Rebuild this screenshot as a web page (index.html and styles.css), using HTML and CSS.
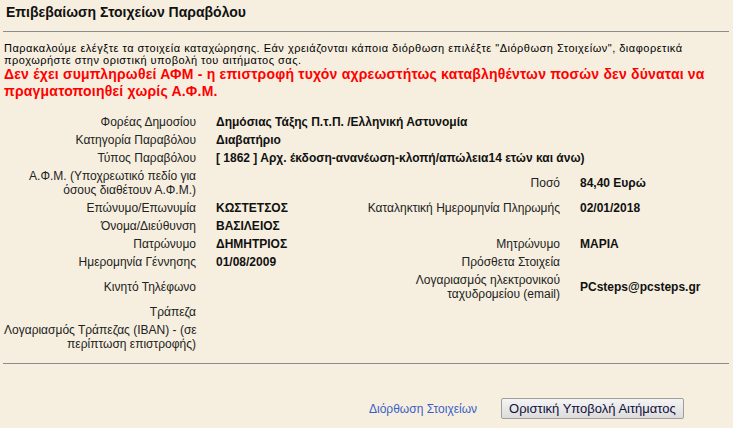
FILE: index.html
```html
<!DOCTYPE html>
<html lang="el">
<head>
<meta charset="utf-8">
<title>Επιβεβαίωση Στοιχείων Παραβόλου</title>
<link rel="stylesheet" href="styles.css">
</head>
<body>
<div class="page">
  <h1 class="title">Επιβεβαίωση Στοιχείων Παραβόλου</h1>
  <hr class="rule rule-top">
  <p class="intro">Παρακαλούμε ελέγξτε τα στοιχεία καταχώρησης. Εάν χρειάζονται κάποια διόρθωση επιλέξτε "Διόρθωση Στοιχείων", διαφορετικά προχωρήστε στην οριστική υποβολή του αιτήματος σας.</p>
  <p class="warning">Δεν έχει συμπληρωθεί ΑΦΜ - η επιστροφή τυχόν αχρεωστήτως καταβληθέντων ποσών δεν δύναται να πραγματοποιηθεί χωρίς Α.Φ.Μ.</p>

  <div class="details">
    <div class="label">Φορέας Δημοσίου</div>
    <div class="value wide">Δημόσιας Τάξης Π.τ.Π. /Ελληνική Αστυνομία</div>

    <div class="label">Κατηγορία Παραβόλου</div>
    <div class="value wide">Διαβατήριο</div>

    <div class="label">Τύπος Παραβόλου</div>
    <div class="value wide">[ 1862 ] Αρχ. έκδοση-ανανέωση-κλοπή/απώλεια14 ετών και άνω)</div>

    <div class="label">Α.Φ.Μ. (Υποχρεωτικό πεδίο για<br>όσους διαθέτουν Α.Φ.Μ.)</div>
    <div class="value"></div>
    <div class="label">Ποσό</div>
    <div class="value">84,40 Ευρώ</div>

    <div class="label">Επώνυμο/Επωνυμία</div>
    <div class="value">ΚΩΣΤΕΤΣΟΣ</div>
    <div class="label">Καταληκτική Ημερομηνία Πληρωμής</div>
    <div class="value">02/01/2018</div>

    <div class="label">Όνομα/Διεύθυνση</div>
    <div class="value">ΒΑΣΙΛΕΙΟΣ</div>
    <div class="label"></div>
    <div class="value"></div>

    <div class="label">Πατρώνυμο</div>
    <div class="value">ΔΗΜΗΤΡΙΟΣ</div>
    <div class="label">Μητρώνυμο</div>
    <div class="value">ΜΑΡΙΑ</div>

    <div class="label">Ημερομηνία Γέννησης</div>
    <div class="value">01/08/2009</div>
    <div class="label">Πρόσθετα Στοιχεία</div>
    <div class="value"></div>

    <div class="label">Κινητό Τηλέφωνο</div>
    <div class="value"></div>
    <div class="label">Λογαριασμός ηλεκτρονικού<br>ταχυδρομείου (email)</div>
    <div class="value">PCsteps@pcsteps.gr</div>

    <div class="label">Τράπεζα</div>
    <div class="value wide"></div>

    <div class="label">Λογαριασμός Τράπεζας (IBAN) - (σε<br>περίπτωση επιστροφής)</div>
    <div class="value wide"></div>
  </div>

  <hr class="rule rule-bottom">

  <div class="actions">
    <a class="fix-link" href="#">Διόρθωση Στοιχείων</a>
    <button class="submit-btn" type="button">Οριστική Υποβολή Αιτήματος</button>
  </div>
</div>
</body>
</html>
```

FILE: styles.css
```css
html, body {
  margin: 0;
  padding: 0;
  background: #f6efdf;
}

body {
  font-family: "Liberation Sans", Arial, sans-serif;
  color: #000;
  width: 733px;
  height: 428px;
  overflow: hidden;
}

.page {
  padding: 0 4px;
}

.title {
  margin: 4px 0 0 2px;
  font-size: 14px;
  line-height: 17px;
  font-weight: bold;
  color: #111;
}

.rule {
  border: 0;
  border-top: 1px solid #8c8c8c;
  height: 0;
  margin-left: -1px;
  margin-right: 0;
}

.rule-top {
  margin-top: 10px;
  margin-bottom: 10px;
}

.intro {
  margin: 0;
  font-size: 11px;
  line-height: 12px;
  letter-spacing: 0.5px;
}

.warning {
  margin: 0;
  font-size: 14px;
  line-height: 17px;
  font-weight: bold;
  letter-spacing: 0.2px;
  color: #ff0000;
}

.details {
  margin-top: 13px;
  display: grid;
  grid-template-columns: 192px 130px 196px 1fr;
  column-gap: 19px;
  font-size: 12px;
  line-height: 14px;
}

.details .label {
  padding: 2px 0;
  text-align: right;
  color: #222;
  white-space: nowrap;
  align-self: center;
}

.details .value {
  padding: 2px 0 2px 1px;
  font-weight: bold;
  color: #111;
  white-space: nowrap;
  align-self: center;
}

.details .value.wide {
  grid-column: 2 / 5;
}

.details .value:empty {
  min-height: 14px;
}

.rule-bottom {
  margin-top: 10px;
  margin-bottom: 0;
}

.actions {
  display: flex;
  align-items: center;
  margin-top: 34px;
  padding-left: 365px;
  gap: 24px;
}

.fix-link {
  font-size: 12px;
  color: #3a5fc8;
  text-decoration: none;
}

.submit-btn {
  font-family: "Liberation Sans", Arial, sans-serif;
  font-size: 13px;
  color: #10103a;
  height: 21px;
  padding: 0 7px;
  border: 1px solid #9e9e9e;
  border-radius: 2px;
  background: linear-gradient(#f4f4f4, #dcdcdc);
}
```
